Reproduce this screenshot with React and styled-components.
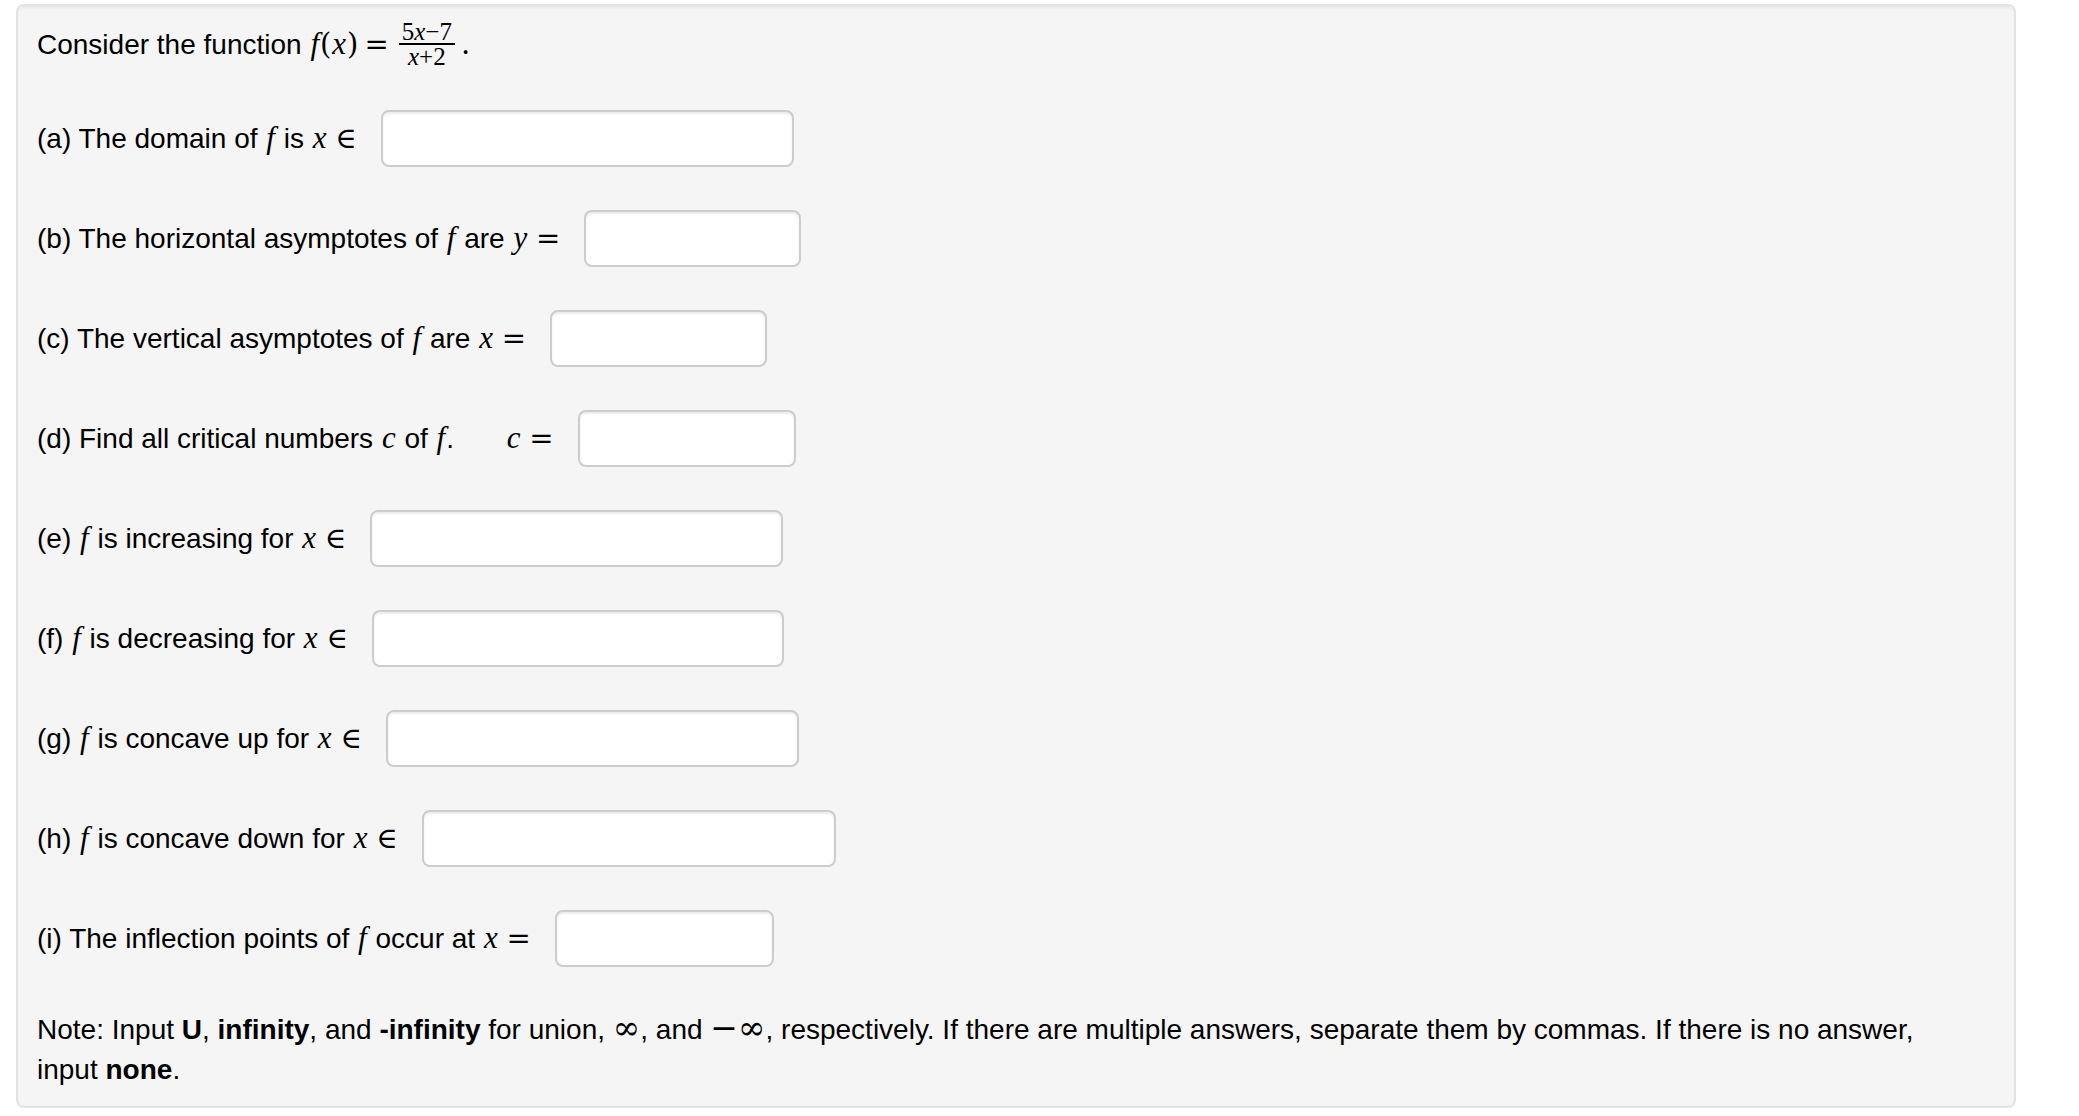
import React from 'react';
import styled, { createGlobalStyle } from 'styled-components';

const GlobalStyle = createGlobalStyle`
  html, body {
    margin: 0;
    padding: 0;
    background: #ffffff;
  }
  body {
    font-family: "Liberation Sans", Arial, Helvetica, sans-serif;
    font-size: 28px;
    line-height: 40px;
    color: #000000;
  }
`;

const Well = styled.div`
  box-sizing: border-box;
  width: 2000px;
  margin: 4px 0 0 16px;
  padding: 18px 19px 16px 19px;
  background: #f5f5f5;
  border: 2px solid #e3e3e3;
  border-radius: 8px;
  box-shadow: inset 0 2px 2px rgba(0, 0, 0, 0.05);
`;

const Intro = styled.div`
  height: 40px;
  line-height: 40px;
  white-space: nowrap;
`;

const M = styled.span`
  font-family: "Liberation Serif", "Times New Roman", serif;
  font-style: italic;
  font-size: 31px;
  padding: 0 1px;
`;

const SmallM = styled.span`
  font-family: "Liberation Serif", "Times New Roman", serif;
  font-style: italic;
`;

const Op = styled.span`
  font-family: "DejaVu Serif", "Liberation Serif", serif;
  font-size: ${(p) => p.$size || 29}px;
  line-height: 1;
`;

const Rel = styled(Op)`
  margin: 0 6px;
`;

const Frac = styled.span`
  display: inline-flex;
  flex-direction: column;
  align-items: center;
  vertical-align: 14px;
  margin: -8px 6px -8px 4px;
  font-family: "Liberation Serif", "Times New Roman", serif;
  font-size: 25px;
  line-height: 21px;
`;

const Num = styled.span`
  padding: 0 3px 1px;
  border-bottom: 2px solid #000;
`;

const Den = styled.span`
  padding: 1px 3px 0;
`;

const Row = styled.div`
  display: flex;
  align-items: center;
  gap: 24px;
  height: 57px;
  margin-top: ${(p) => (p.$first ? 46 : 43)}px;
`;

const Label = styled.span`
  white-space: nowrap;
`;

const Spacer = styled.span`
  display: inline-block;
  width: 44px;
`;

const AnswerInput = styled.input`
  box-sizing: border-box;
  width: ${(p) => p.$width}px;
  height: 57px;
  padding: 8px 12px;
  background: #ffffff;
  border: 2px solid #cccccc;
  border-radius: 8px;
  box-shadow: inset 0 2px 2px rgba(0, 0, 0, 0.075);
  font-family: inherit;
  font-size: 28px;
  outline: none;
`;

const Note = styled.p`
  margin: 43px 0 0;
  max-width: 1920px;
  line-height: 40px;

  b {
    font-weight: bold;
  }
`;

const rows = [
  { id: 'a', label: <>(a) The domain of <M>f</M> is <M>x</M> <Op>∈</Op></>, width: 413 },
  { id: 'b', label: <>(b) The horizontal asymptotes of <M>f</M> are <M>y</M> <Op>=</Op></>, width: 217 },
  { id: 'c', label: <>(c) The vertical asymptotes of <M>f</M> are <M>x</M> <Op>=</Op></>, width: 217 },
  {
    id: 'd',
    label: (
      <>
        (d) Find all critical numbers <M>c</M> of <M>f</M>.<Spacer /> <M>c</M> <Op>=</Op>
      </>
    ),
    width: 218,
  },
  { id: 'e', label: <>(e) <M>f</M> is increasing for <M>x</M> <Op>∈</Op></>, width: 413 },
  { id: 'f', label: <>(f) <M>f</M> is decreasing for <M>x</M> <Op>∈</Op></>, width: 412 },
  { id: 'g', label: <>(g) <M>f</M> is concave up for <M>x</M> <Op>∈</Op></>, width: 413 },
  { id: 'h', label: <>(h) <M>f</M> is concave down for <M>x</M> <Op>∈</Op></>, width: 414 },
  { id: 'i', label: <>(i) The inflection points of <M>f</M> occur at <M>x</M> <Op>=</Op></>, width: 219 },
];

function App() {
  return (
    <>
      <GlobalStyle />
      <Well>
        <Intro>
          Consider the function <M>f</M>
          <Op>(</Op>
          <M>x</M>
          <Op>)</Op>
          <Rel>=</Rel>
          <Frac>
            <Num>
              5<SmallM>x</SmallM>−7
            </Num>
            <Den>
              <SmallM>x</SmallM>+2
            </Den>
          </Frac>
          <Op>.</Op>
        </Intro>

        {rows.map((r, i) => (
          <Row key={r.id} $first={i === 0}>
            <Label>{r.label}</Label>
            <AnswerInput type="text" $width={r.width} aria-label={`answer ${r.id}`} />
          </Row>
        ))}

        <Note>
          Note: Input <b>U</b>, <b>infinity</b>, and <b>-infinity</b> for union,{' '}
          <Op $size={33}>∞</Op>, and <Op $size={33}>−∞</Op>, respectively. If there are multiple
          answers, separate them by commas. If there is no answer, input <b>none</b>.
        </Note>
      </Well>
    </>
  );
}

export default App;
